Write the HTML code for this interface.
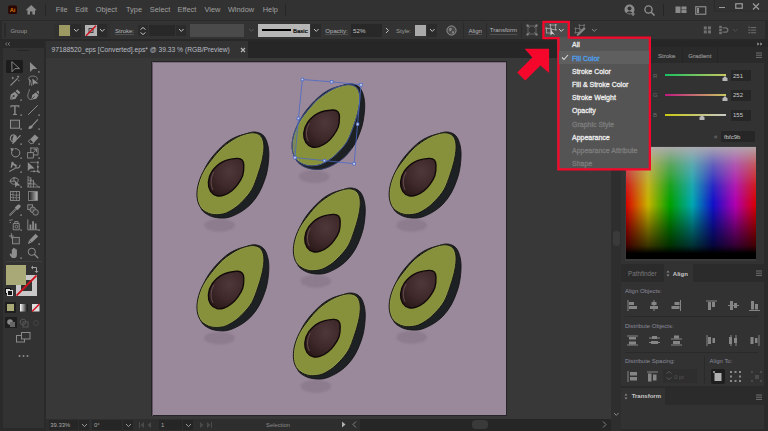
<!DOCTYPE html>
<html><head><meta charset="utf-8">
<style>
*{margin:0;padding:0;box-sizing:border-box}
html,body{width:768px;height:431px;overflow:hidden;background:#2b2b2b;font-family:"Liberation Sans",sans-serif;position:relative}
.a{position:absolute;display:block}
.t{position:absolute;white-space:nowrap;line-height:1}
</style></head><body>
<div class="a" style="left:0px;top:0px;width:768px;height:20px;background:#323232;"></div>
<div class="a" style="left:0px;top:20px;width:768px;height:1px;background:#2a2a2a;"></div>
<div class="a" style="left:0px;top:21px;width:768px;height:18px;background:#333333;"></div>
<div class="a" style="left:0px;top:39px;width:768px;height:2px;background:#282828;"></div>
<div class="a" style="left:0px;top:21px;width:2px;height:18px;background:#2a2a2a;"></div>
<div class="a" style="left:765px;top:21px;width:3px;height:18px;background:#2a2a2a;"></div>
<div class="a" style="left:0px;top:41px;width:46px;height:390px;background:#2a2a2a;"></div>
<div class="a" style="left:3px;top:41px;width:41px;height:387px;background:#323232;"></div>
<div class="a" style="left:3px;top:41px;width:41px;height:7px;background:#282828;"></div>
<div class="a" style="left:46px;top:41px;width:565px;height:17px;background:#262626;"></div>
<div class="a" style="left:46px;top:41px;width:202px;height:17px;background:#333333;"></div>
<div class="a" style="left:46px;top:58px;width:565px;height:361px;background:#383838;"></div>
<div class="a" style="left:46px;top:419px;width:565px;height:12px;background:#2e2e2e;"></div>
<div class="a" style="left:611px;top:41px;width:10px;height:390px;background:#2e2e2e;"></div>
<div class="a" style="left:621px;top:41px;width:147px;height:390px;background:#2a2a2a;"></div>
<div class="a" style="left:621px;top:63px;width:143px;height:201px;background:#323232;"></div>
<div class="a" style="left:621px;top:41px;width:147px;height:6px;background:#262626;"></div>
<div class="a" style="left:621px;top:47px;width:143px;height:16px;background:#2a2a2a;"></div>
<div class="a" style="left:621px;top:264px;width:143px;height:18px;background:#2b2b2b;"></div>
<div class="a" style="left:621px;top:282px;width:143px;height:104px;background:#323232;"></div>
<div class="a" style="left:621px;top:388px;width:143px;height:17px;background:#2b2b2b;"></div>
<div class="a" style="left:621px;top:405px;width:143px;height:24px;background:#323232;"></div>
<svg class="a" style="left:8px;top:5px;" width="10" height="10" viewBox="0 0 10 10"><rect x="0.2" y="0.4" width="8.8" height="8.6" rx="1.5" fill="#2a0600"/><text x="4.6" y="7" font-family="Liberation Sans" font-weight="bold" font-size="5.6" fill="#d87a00" text-anchor="middle">Ai</text></svg>
<svg class="a" style="left:25px;top:4px;" width="12" height="11" viewBox="0 0 12 11"><path d="M6.2 0.9 L0.6 6.3 H2.5 V10.5 H5 V7.5 H7.4 V10.5 H10 V6.3 H11.8 Z" fill="#8a8a8a"/></svg>
<div class="a" style="left:45px;top:4px;width:1px;height:12px;background:#262626;"></div>
<div class="t" style="left:55.7px;top:6.04px;font-size:7.4px;color:#a0a0a0;">File</div>
<div class="t" style="left:75.2px;top:6.04px;font-size:7.4px;color:#a0a0a0;">Edit</div>
<div class="t" style="left:95.7px;top:6.04px;font-size:7.4px;color:#a0a0a0;">Object</div>
<div class="t" style="left:126px;top:6.04px;font-size:7.4px;color:#a0a0a0;">Type</div>
<div class="t" style="left:149.8px;top:6.04px;font-size:7.4px;color:#a0a0a0;">Select</div>
<div class="t" style="left:177.5px;top:6.04px;font-size:7.4px;color:#a0a0a0;">Effect</div>
<div class="t" style="left:204.5px;top:6.04px;font-size:7.4px;color:#a0a0a0;">View</div>
<div class="t" style="left:227.9px;top:6.04px;font-size:7.4px;color:#a0a0a0;">Window</div>
<div class="t" style="left:262.7px;top:6.04px;font-size:7.4px;color:#a0a0a0;">Help</div>
<div class="a" style="left:285px;top:4px;width:1px;height:12px;background:#262626;"></div>
<svg class="a" style="left:624px;top:4px;" width="13" height="12" viewBox="0 0 13 12"><circle cx="5.5" cy="5.5" r="5" fill="#8a8a8a"/><circle cx="5.5" cy="4.5" r="2" fill="#323232"/><path d="M2 9.5 Q5.5 5 9 9.5" fill="#323232"/><path d="M9 8 V12 M7 10 H11" stroke="#8a8a8a" stroke-width="1.2"/></svg>
<svg class="a" style="left:644px;top:5px;" width="12" height="11" viewBox="0 0 12 11"><circle cx="4.5" cy="4.5" r="3.6" fill="none" stroke="#8e8e8e" stroke-width="1.4"/><path d="M7.2 7.2 L10.5 10.5" stroke="#8e8e8e" stroke-width="1.6"/></svg>
<div class="a" style="left:663px;top:4px;width:1px;height:12px;background:#262626;"></div>
<svg class="a" style="left:675px;top:6px;" width="12" height="8" viewBox="0 0 12 8"><rect x="0.5" y="0.5" width="5" height="6.5" fill="#8a8a8a"/><rect x="6.5" y="0.5" width="5" height="3" fill="#8a8a8a"/><rect x="6.5" y="4" width="5" height="3" fill="#8a8a8a"/></svg>
<svg class="a" style="left:695px;top:6px;" width="12" height="9" viewBox="0 0 12 9"><rect x="0.75" y="0.75" width="10" height="7.5" fill="none" stroke="#8a8a8a" stroke-width="1.2"/><rect x="2" y="2" width="2" height="5" fill="#8a8a8a"/></svg>
<svg class="a" style="left:714px;top:-1px;" width="55" height="13" viewBox="0 0 55 13"><rect x="0.5" y="0.5" width="60" height="11.5" fill="none" stroke="#2a2a2a" stroke-width="1"/></svg>
<div class="a" style="left:719px;top:7px;width:6px;height:1px;background:#9a9a9a;"></div>
<svg class="a" style="left:735px;top:3px;" width="8" height="6" viewBox="0 0 8 6"><rect x="0.75" y="0.75" width="6.5" height="4.5" fill="none" stroke="#9a9a9a" stroke-width="1.2"/></svg>
<svg class="a" style="left:752px;top:3px;" width="8" height="7" viewBox="0 0 8 7"><path d="M1 0.5 L7 6.5 M7 0.5 L1 6.5" stroke="#9a9a9a" stroke-width="1.2"/></svg>
<div class="a" style="left:4px;top:23px;width:2px;height:15px;background:#2a2a2a;"></div>
<div class="t" style="left:10.4px;top:27.92px;font-size:6.0px;color:#9a9a9a;">Group</div>
<div class="a" style="left:54px;top:23px;width:56px;height:15px;background:#303030;"></div>
<div class="a" style="left:59px;top:25px;width:11px;height:11px;background:#9c9a62;"></div>
<div class="a" style="left:71px;top:24px;width:10px;height:13px;background:#2a2a2a;"></div>
<svg class="a" style="left:72.7px;top:28.3px;" width="6.6" height="4.4" viewBox="0 0 6.6 4.4"><polyline points="1,1 3.3,3.4 5.6,1" fill="none" stroke="#c0c0c0" stroke-width="1"/></svg>
<svg class="a" style="left:85px;top:24.5px;" width="12" height="11.5" viewBox="0 0 12 11.5"><rect width="12" height="11.5" fill="#b4b4b4"/><rect x="4" y="3.5" width="4" height="4" fill="none" stroke="#444" stroke-width="1"/><path d="M1 10.8 L11 0.8" stroke="#d0101c" stroke-width="1.5"/></svg>
<div class="a" style="left:98px;top:24px;width:9px;height:13px;background:#2a2a2a;"></div>
<svg class="a" style="left:99.2px;top:28.3px;" width="6.6" height="4.4" viewBox="0 0 6.6 4.4"><polyline points="1,1 3.3,3.4 5.6,1" fill="none" stroke="#c0c0c0" stroke-width="1"/></svg>
<div class="t" style="left:115px;top:27.52px;font-size:6.0px;color:#b4b6ba;border-bottom:1px solid #505050;line-height:1.15">Stroke:</div>
<div class="a" style="left:138px;top:24.5px;width:10px;height:11.5px;background:#2b2b2b;"></div>
<svg class="a" style="left:139px;top:25.5px;" width="8" height="10" viewBox="0 0 8 10"><polyline points="1.5,3.5 4,1.5 6.5,3.5" fill="none" stroke="#bbb" stroke-width="1"/><polyline points="1.5,6.5 4,8.5 6.5,6.5" fill="none" stroke="#bbb" stroke-width="1"/></svg>
<div class="a" style="left:149px;top:24.5px;width:26px;height:11.5px;background:#282828;"></div>
<div class="a" style="left:176px;top:24.5px;width:10px;height:11.5px;background:#2b2b2b;"></div>
<svg class="a" style="left:177.7px;top:28.3px;" width="6.6" height="4.4" viewBox="0 0 6.6 4.4"><polyline points="1,1 3.3,3.4 5.6,1" fill="none" stroke="#c0c0c0" stroke-width="1"/></svg>
<div class="a" style="left:190px;top:24px;width:54px;height:13px;background:#4a4a4a;"></div>
<svg class="a" style="left:248.2px;top:28.3px;" width="6.6" height="4.4" viewBox="0 0 6.6 4.4"><polyline points="1,1 3.3,3.4 5.6,1" fill="none" stroke="#555" stroke-width="1"/></svg>
<div class="a" style="left:258px;top:24px;width:52px;height:13px;background:#b6b6b6;"></div>
<div class="a" style="left:262px;top:29px;width:29px;height:2px;background:#000;"></div>
<div class="t" style="left:293px;top:27.92px;font-size:6.0px;color:#000;-webkit-text-stroke:0.2px #000">Basic</div>
<div class="a" style="left:311px;top:24px;width:10px;height:13px;background:#2b2b2b;"></div>
<svg class="a" style="left:312.7px;top:28.3px;" width="6.6" height="4.4" viewBox="0 0 6.6 4.4"><polyline points="1,1 3.3,3.4 5.6,1" fill="none" stroke="#c0c0c0" stroke-width="1"/></svg>
<div class="t" style="left:325.3px;top:27.44px;font-size:6.1px;color:#b4b6ba;border-bottom:1px solid #505050;line-height:1.15">Opacity:</div>
<div class="a" style="left:351px;top:24px;width:31px;height:13px;background:#282828;"></div>
<div class="t" style="left:353px;top:27.85px;font-size:6.2px;color:#c4c4c4;">52%</div>
<svg class="a" style="left:385px;top:27px;" width="5" height="7" viewBox="0 0 5 7"><polyline points="1,1 3.5,3.5 1,6" fill="none" stroke="#c0c0c0" stroke-width="1"/></svg>
<div class="t" style="left:396px;top:28.02px;font-size:6.0px;color:#9a9a9a;">Style:</div>
<div class="a" style="left:415px;top:24.5px;width:11px;height:11.5px;background:#aaaaaa;"></div>
<div class="a" style="left:427px;top:24px;width:10px;height:13px;background:#2b2b2b;"></div>
<svg class="a" style="left:428.7px;top:28.3px;" width="6.6" height="4.4" viewBox="0 0 6.6 4.4"><polyline points="1,1 3.3,3.4 5.6,1" fill="none" stroke="#c0c0c0" stroke-width="1"/></svg>
<svg class="a" style="left:446px;top:24.5px;" width="11" height="11" viewBox="0 0 11 11"><circle cx="5.5" cy="5.5" r="4.6" fill="#4a4a4a" stroke="#9a9a9a" stroke-width="0.9"/><path d="M3 3.5 Q5 2.5 6 4 Q5 6 3.5 6.5 Z M6.5 6 Q8.5 6 8 8 Q6.5 9 6 8 Z" fill="#8a8a8a"/></svg>
<div class="a" style="left:463px;top:23px;width:1px;height:15px;background:#2a2a2a;"></div>
<div class="t" style="left:468.4px;top:27.44px;font-size:6.1px;color:#b4b6ba;border-bottom:1px solid #505050;line-height:1.15">Align</div>
<div class="a" style="left:486px;top:23px;width:1px;height:15px;background:#2a2a2a;"></div>
<div class="t" style="left:489.7px;top:27.48px;font-size:6.05px;color:#b4b6ba;border-bottom:1px solid #505050;line-height:1.15">Transform</div>
<div class="a" style="left:521px;top:23px;width:1px;height:15px;background:#2a2a2a;"></div>
<svg class="a" style="left:526px;top:24px;" width="12" height="12" viewBox="0 0 12 12"><g stroke="#7a7a7a" stroke-width="0.7" fill="none"><rect x="2" y="2" width="8" height="8"/><path d="M2 2 L4 4 M10 2 L8 4 M2 10 L4 8 M10 10 L8 8"/></g><g fill="#8a8a8a"><rect x="0.5" y="0.5" width="2" height="2"/><rect x="9.5" y="0.5" width="2" height="2"/><rect x="0.5" y="9.5" width="2" height="2"/><rect x="9.5" y="9.5" width="2" height="2"/></g></svg>
<div class="a" style="left:543px;top:21px;width:27px;height:18px;background:#4c4c4c;"></div>
<svg class="a" style="left:545px;top:24px;" width="14" height="12" viewBox="0 0 14 12"><g fill="none" stroke="#a8a8a8" stroke-width="0.8"><rect x="1.5" y="4.5" width="5" height="4.5"/><rect x="5.5" y="1" width="5" height="4.5"/></g><g fill="#a8a8a8"><rect x="0.5" y="3.5" width="1.6" height="1.6"/><rect x="4.5" y="0" width="1.6" height="1.6"/><rect x="10" y="0" width="1.6" height="1.6"/><rect x="10" y="5" width="1.6" height="1.6"/></g><path d="M5.5 5.5 L5.5 11.5 L7.2 9.8 L10 11 Z" fill="#d0d0d0"/></svg>
<svg class="a" style="left:557.7px;top:28.3px;" width="6.6" height="4.4" viewBox="0 0 6.6 4.4"><polyline points="1,1 3.3,3.4 5.6,1" fill="none" stroke="#d0d0d0" stroke-width="1"/></svg>
<svg class="a" style="left:574px;top:24px;" width="14" height="12" viewBox="0 0 14 12"><g fill="none" stroke="#747474" stroke-width="0.8"><rect x="1.5" y="4.5" width="4.5" height="4"/><rect x="5.5" y="1.3" width="4.5" height="4"/></g><g fill="#747474"><rect x="0.6" y="3.6" width="1.5" height="1.5"/><rect x="0.6" y="8" width="1.5" height="1.5"/><rect x="4.6" y="0.4" width="1.5" height="1.5"/><rect x="9.5" y="0.4" width="1.5" height="1.5"/></g><path d="M3.8 10.8 L10.2 4.6" stroke="#858585" stroke-width="2.2" stroke-linecap="round"/></svg>
<svg class="a" style="left:590.7px;top:28.3px;" width="6.6" height="4.4" viewBox="0 0 6.6 4.4"><polyline points="1,1 3.3,3.4 5.6,1" fill="none" stroke="#8a8a8a" stroke-width="1"/></svg>
<svg class="a" style="left:703px;top:26px;" width="9" height="8" viewBox="0 0 9 8"><g fill="#707070"><rect x="0.8" y="0.4" width="3" height="3"/><rect x="5" y="0.4" width="3" height="3"/><rect x="0.8" y="4.4" width="3" height="3"/><rect x="5" y="4.4" width="3" height="3"/></g></svg>
<svg class="a" style="left:718px;top:25px;" width="12" height="10" viewBox="0 0 12 10"><g fill="#707070"><rect x="1.2" y="0.8" width="2.6" height="2.4"/><rect x="1.2" y="3.8" width="2.6" height="2.4"/><rect x="1.2" y="6.8" width="2.6" height="2.4"/></g><path d="M4.5 2.8 H7.5 Q9.8 2.8 9.8 5 Q9.8 7.2 7.5 7.2 H4.5" fill="none" stroke="#707070" stroke-width="1.3"/></svg>
<svg class="a" style="left:731.7px;top:28.3px;" width="6.6" height="4.4" viewBox="0 0 6.6 4.4"><polyline points="1,1 3.3,3.4 5.6,1" fill="none" stroke="#4e4e4e" stroke-width="1"/></svg>
<svg class="a" style="left:748px;top:26px;" width="9" height="8" viewBox="0 0 9 8"><g fill="#6a6a6a"><rect x="0.5" y="0.6" width="1.3" height="1.5"/><rect x="0.5" y="3.3" width="1.3" height="1.5"/><rect x="0.5" y="6" width="1.3" height="1.5"/><rect x="2.6" y="1" width="5.5" height="1.1"/><rect x="2.6" y="3.6" width="5.5" height="1.1"/><rect x="2.6" y="6.2" width="5.5" height="1.1"/></g></svg>
<div class="a" style="left:151px;top:61px;width:356px;height:355px;background:#262426;"></div>
<div class="a" style="left:152px;top:62px;width:354px;height:353px;background:#9a899b;"></div>
<div class="a" style="left:151.5px;top:61.5px;width:1.5px;height:354px;background:#665868;"></div>
<div class="a" style="left:151.5px;top:61.5px;width:354px;height:1px;background:#7a6c7c;"></div>
<div class="t" style="left:51.5px;top:46.70px;font-size:6.73px;color:#b8bcc4;">97188520_eps [Converted].eps* @ 39.33 % (RGB/Preview)</div>
<svg class="a" style="left:239.5px;top:46.5px;" width="6" height="6" viewBox="0 0 6 6"><path d="M1 1 L5 5 M5 1 L1 5" stroke="#b8b8b8" stroke-width="1.1"/></svg>
<svg class="a" style="left:5px;top:42px;" width="6" height="4" viewBox="0 0 6 4"><path d="M2 0.3 L0.6 2 L2 3.7 M4.6 0.3 L3.2 2 L4.6 3.7" fill="none" stroke="#8a8a8a" stroke-width="0.8"/></svg>
<div class="a" style="left:17px;top:50px;width:12px;height:1.2px;background:#262626;"></div>
<div class="a" style="left:6px;top:60px;width:17px;height:13px;background:#1c1c1c;border-radius:1.5px"></div>
<svg class="a" style="left:8.5px;top:60.8px;" width="12" height="12" viewBox="0 0 12 12"><path d="M2.8 1 L3 10.8 L5.9 7.6 L10.1 7.6 Z" fill="none" stroke="#8e8e8e" stroke-width="0.9" stroke-linejoin="round" stroke-linecap="round"/></svg>
<svg class="a" style="left:26.5px;top:60.8px;" width="12" height="12" viewBox="0 0 12 12"><path d="M2.9 1 L3.1 11.1 L6 8 L10.2 8 Z" fill="#8e8e8e"/></svg>
<svg class="a" style="left:38.3px;top:71.2px;" width="1.8" height="1.8" viewBox="0 0 1.8 1.8"><circle cx="0.9" cy="0.9" r="0.85" fill="#8a8a8a"/></svg>
<svg class="a" style="left:8.5px;top:75.14px;" width="12" height="12" viewBox="0 0 12 12"><path d="M1.8 10.2 L8.4 3.6" fill="none" stroke="#8e8e8e" stroke-width="1.2" stroke-linejoin="round" stroke-linecap="round"/><path d="M3.8 1.4 L4.324999999999999 2.375 L5.3 2.9 L4.324999999999999 3.425 L3.8 4.4 L3.275 3.425 L2.3 2.9 L3.275 2.375 Z" fill="#8e8e8e"/><path d="M9.1 0.30000000000000004 L9.625 1.2750000000000001 L10.6 1.8 L9.625 2.325 L9.1 3.3 L8.575 2.325 L7.6 1.8 L8.575 1.2750000000000001 Z" fill="#8e8e8e"/><path d="M9.8 4.5 L10.15 5.15 L10.8 5.5 L10.15 5.85 L9.8 6.5 L9.450000000000001 5.85 L8.8 5.5 L9.450000000000001 5.15 Z" fill="#8e8e8e"/></svg>
<svg class="a" style="left:26.5px;top:75.14px;" width="12" height="12" viewBox="0 0 12 12"><path d="M3.2 6 C0.5 4.5 1.5 1 5.5 1 C9.5 1 11.5 3 10 5.2 M2.5 4.5 C2 6.5 3 8 2.5 10 M3.5 5.5 C4 7 4 9 4.5 10.5" fill="none" stroke="#8e8e8e" stroke-width="0.8" stroke-linejoin="round" stroke-linecap="round"/><path d="M5.3 3.6 L5.8 10.5 L7.6 8.6 L11.6 8.6 Z" fill="#8e8e8e"/></svg>
<svg class="a" style="left:8.5px;top:89.47999999999999px;" width="12" height="12" viewBox="0 0 12 12"><path d="M0.8 10.8 L1.8 5.6 L5.8 2.8 L9 6 L6.3 10 Z M6.6 2.1 L8.4 0.6 L11.3 3.5 L9.8 5.3 Z" fill="#8e8e8e"/><path d="M1 10.6 L4.2 7.4" fill="none" stroke="#323232" stroke-width="0.7" stroke-linejoin="round" stroke-linecap="round"/><circle cx="4.7" cy="6.9" r="0.9" fill="#323232"/></svg>
<svg class="a" style="left:20.2px;top:99.47999999999999px;" width="2.2" height="2.2" viewBox="0 0 2.2 2.2"><circle cx="1.1" cy="1.1" r="0.85" fill="#8a8a8a"/></svg>
<svg class="a" style="left:26.5px;top:89.47999999999999px;" width="12" height="12" viewBox="0 0 12 12"><path d="M4.3 10.8 L5.2 6 L8.8 3.4 L11.6 6.3 L9.3 9.8 Z M9.4 2.9 L10.9 1.6 L13 3.8 L12 5.2 Z" fill="#8e8e8e"/><path d="M4.5 10.6 L7.3 7.6" fill="none" stroke="#323232" stroke-width="0.7" stroke-linejoin="round" stroke-linecap="round"/><path d="M1.8 -0.5 C3.8 1.5 0.5 4 0.8 7 C1 9.5 2.5 11 4.5 10.5" fill="none" stroke="#8e8e8e" stroke-width="0.8" stroke-linejoin="round" stroke-linecap="round"/></svg>
<svg class="a" style="left:8.5px;top:103.82px;" width="12" height="12" viewBox="0 0 12 12"><path d="M1.5 1.2 H10.3 V3.6 H9.4 V2.4 H6.6 V10 H7.9 V10.9 H3.9 V10 H5.2 V2.4 H2.4 V3.6 H1.5 Z" fill="#8e8e8e"/></svg>
<svg class="a" style="left:20.2px;top:113.82px;" width="2.2" height="2.2" viewBox="0 0 2.2 2.2"><circle cx="1.1" cy="1.1" r="0.85" fill="#8a8a8a"/></svg>
<svg class="a" style="left:26.5px;top:103.82px;" width="12" height="12" viewBox="0 0 12 12"><path d="M1.4 10.6 L10.4 1.6" fill="none" stroke="#8e8e8e" stroke-width="1.0" stroke-linejoin="round" stroke-linecap="round"/></svg>
<svg class="a" style="left:38.2px;top:113.82px;" width="2.2" height="2.2" viewBox="0 0 2.2 2.2"><circle cx="1.1" cy="1.1" r="0.85" fill="#8a8a8a"/></svg>
<svg class="a" style="left:8.5px;top:118.16px;" width="12" height="12" viewBox="0 0 12 12"><rect x="1.5" y="2.2" width="9" height="8" fill="#3e3e3e" stroke="#8e8e8e" stroke-width="1"/></svg>
<svg class="a" style="left:20.2px;top:128.16px;" width="2.2" height="2.2" viewBox="0 0 2.2 2.2"><circle cx="1.1" cy="1.1" r="0.85" fill="#8a8a8a"/></svg>
<svg class="a" style="left:26.5px;top:118.16px;" width="12" height="12" viewBox="0 0 12 12"><path d="M1.5 11 C1.5 8.5 2.5 7.2 4.6 7.4 L10.6 1 L11.3 1.7 L5.6 8.3 C5.8 10.3 4.2 11.2 1.5 11 Z" fill="#8e8e8e"/></svg>
<svg class="a" style="left:38.2px;top:128.16px;" width="2.2" height="2.2" viewBox="0 0 2.2 2.2"><circle cx="1.1" cy="1.1" r="0.85" fill="#8a8a8a"/></svg>
<svg class="a" style="left:8.5px;top:132.5px;" width="12" height="12" viewBox="0 0 12 12"><path d="M4.8 1.8 C1.5 1.8 0.3 5.5 2.3 7.8 C3.5 9 5.5 8.6 6.5 7.8" fill="none" stroke="#8e8e8e" stroke-width="1.1" stroke-linejoin="round" stroke-linecap="round"/><path d="M3.8 10.2 L11.2 2.6" fill="none" stroke="#8e8e8e" stroke-width="1.3" stroke-linejoin="round" stroke-linecap="round"/><path d="M4.8 1.8 C7.5 1.8 8.6 4 7.6 6.2 L5 8.6 C3.2 8 3 6 4 4.5 Z" fill="#8e8e8e"/></svg>
<svg class="a" style="left:20.2px;top:142.5px;" width="2.2" height="2.2" viewBox="0 0 2.2 2.2"><circle cx="1.1" cy="1.1" r="0.85" fill="#8a8a8a"/></svg>
<svg class="a" style="left:26.5px;top:132.5px;" width="12" height="12" viewBox="0 0 12 12"><path d="M3.2 6.3 L7.8 1.4 L11.6 4.8 L6.6 10 Z" fill="#8e8e8e"/><path d="M3.2 6.3 L1.4 8.3 L3.8 10.8 L6.6 10" fill="none" stroke="#8e8e8e" stroke-width="0.9" stroke-linejoin="round" stroke-linecap="round"/></svg>
<svg class="a" style="left:38.2px;top:142.5px;" width="2.2" height="2.2" viewBox="0 0 2.2 2.2"><circle cx="1.1" cy="1.1" r="0.85" fill="#8a8a8a"/></svg>
<svg class="a" style="left:8.5px;top:146.83999999999997px;" width="12" height="12" viewBox="0 0 12 12"><path d="M3.3 3.2 A4.2 4.2 0 1 0 6 1.6" fill="none" stroke="#8e8e8e" stroke-width="1.0" stroke-linejoin="round" stroke-linecap="round"/><path d="M1.4 0.8 L5.2 1.8 L2.6 4.6 Z" fill="#8e8e8e"/></svg>
<svg class="a" style="left:20.2px;top:156.83999999999997px;" width="2.2" height="2.2" viewBox="0 0 2.2 2.2"><circle cx="1.1" cy="1.1" r="0.85" fill="#8a8a8a"/></svg>
<svg class="a" style="left:26.5px;top:146.83999999999997px;" width="12" height="12" viewBox="0 0 12 12"><path d="M0.8 5.6 H6.4 V11 H0.8 Z M3.8 1 H11 V8 H6.4 M3.8 1 V5.6 M6.3 5.5 L9.5 2.3 M7 2.3 H9.5 V4.8" fill="none" stroke="#8e8e8e" stroke-width="0.9" stroke-linejoin="round" stroke-linecap="round"/></svg>
<svg class="a" style="left:38.2px;top:156.83999999999997px;" width="2.2" height="2.2" viewBox="0 0 2.2 2.2"><circle cx="1.1" cy="1.1" r="0.85" fill="#8a8a8a"/></svg>
<svg class="a" style="left:8.5px;top:161.18px;" width="12" height="12" viewBox="0 0 12 12"><path d="M0.8 10.4 C2.5 8.5 4 9.5 5.5 7.5 C6.5 6 8 7.5 9.5 6.8 C10.8 6.2 11 5 11 4" fill="none" stroke="#8e8e8e" stroke-width="1.1" stroke-linejoin="round" stroke-linecap="round"/><path d="M2.5 1 C4 0.3 5 1.2 4.8 2.5 C6.5 3 8 3.5 8 5.3 L6.5 6 C5.5 4.5 4.5 4 3.6 4.6 L2.6 7 L1.6 6.4 L2.2 3.6 Z" fill="#8e8e8e"/></svg>
<svg class="a" style="left:20.2px;top:171.18px;" width="2.2" height="2.2" viewBox="0 0 2.2 2.2"><circle cx="1.1" cy="1.1" r="0.85" fill="#8a8a8a"/></svg>
<svg class="a" style="left:26.5px;top:161.18px;" width="12" height="12" viewBox="0 0 12 12"><path d="M0.8 1 L0.8 10 L3.2 7.8 L7.6 7.4 Z" fill="#8e8e8e"/><path d="M3.5 1.3 H10.8 V10.3 H3.5" fill="none" stroke="#8e8e8e" stroke-width="0.7" stroke-linejoin="round" stroke-linecap="round"/><g fill="#8e8e8e"><rect x="10" y="0.5" width="1.7" height="1.7"/><rect x="10" y="9.5" width="1.7" height="1.7"/><rect x="6.3" y="9.5" width="1.7" height="1.7"/><rect x="10" y="5" width="1.7" height="1.7"/></g></svg>
<svg class="a" style="left:38.2px;top:171.18px;" width="2.2" height="2.2" viewBox="0 0 2.2 2.2"><circle cx="1.1" cy="1.1" r="0.85" fill="#8a8a8a"/></svg>
<svg class="a" style="left:8.5px;top:175.51999999999998px;" width="12" height="12" viewBox="0 0 12 12"><path d="M5.2 1.8 C0.5 1.8 0 7.5 4.5 8.2 C8 8.5 10.5 4 8.5 2.6 C7.6 2 6.5 1.8 5.2 1.8 Z M0.8 5.2 H5.5 M5 2 V5" fill="none" stroke="#8e8e8e" stroke-width="0.9" stroke-linejoin="round" stroke-linecap="round"/><path d="M5.8 4.6 L6.2 11.4 L8 9.6 L11.6 9.8 Z" fill="#8e8e8e"/></svg>
<svg class="a" style="left:20.2px;top:185.51999999999998px;" width="2.2" height="2.2" viewBox="0 0 2.2 2.2"><circle cx="1.1" cy="1.1" r="0.85" fill="#8a8a8a"/></svg>
<svg class="a" style="left:26.5px;top:175.51999999999998px;" width="12" height="12" viewBox="0 0 12 12"><path d="M1 0.8 V11 H11 Z M1 4 L4.5 4.8 M1 7.5 L8 8.2 M3.8 1.6 V11 M6.5 4.2 V11 M1 11 L3.8 4.3" fill="none" stroke="#8e8e8e" stroke-width="0.8" stroke-linejoin="round" stroke-linecap="round"/></svg>
<svg class="a" style="left:38.2px;top:185.51999999999998px;" width="2.2" height="2.2" viewBox="0 0 2.2 2.2"><circle cx="1.1" cy="1.1" r="0.85" fill="#8a8a8a"/></svg>
<svg class="a" style="left:8.5px;top:189.86px;" width="12" height="12" viewBox="0 0 12 12"><rect x="1.5" y="1.6" width="9" height="8.8" fill="none" stroke="#8e8e8e" stroke-width="0.9"/><path d="M1.5 4.5 C4 3.5 6 6.5 10.5 5 M1.5 7.5 C4 6.5 6 8.8 10.5 7.5 M4.2 1.6 C3 4.5 5.2 7.5 4 10.4 M7.4 1.6 C8.5 4.5 6.2 7.5 7.6 10.4" fill="none" stroke="#8e8e8e" stroke-width="0.7" stroke-linejoin="round" stroke-linecap="round"/></svg>
<svg class="a" style="left:26.5px;top:189.86px;" width="12" height="12" viewBox="0 0 12 12"><defs><linearGradient id="gr"><stop offset="0" stop-color="#1a1a1a"/><stop offset="1" stop-color="#b8b8b8"/></linearGradient></defs><rect x="1.5" y="1.6" width="9" height="8.8" fill="url(#gr)" stroke="#8e8e8e" stroke-width="0.8"/></svg>
<svg class="a" style="left:8.5px;top:204.2px;" width="12" height="12" viewBox="0 0 12 12"><path d="M1.2 10.8 L6.8 5.2" fill="none" stroke="#8e8e8e" stroke-width="1.8" stroke-linejoin="round" stroke-linecap="round"/><path d="M1.2 10.8 L6.8 5.2" fill="none" stroke="#323232" stroke-width="0.6" stroke-linejoin="round" stroke-linecap="round"/><path d="M5.8 3.6 L8.5 0.9 C9.3 0.2 10.6 0.4 11.2 1 C11.8 1.6 11.8 2.8 11.1 3.6 L8.4 6.2 Z" fill="#8e8e8e"/></svg>
<svg class="a" style="left:20.2px;top:214.2px;" width="2.2" height="2.2" viewBox="0 0 2.2 2.2"><circle cx="1.1" cy="1.1" r="0.85" fill="#8a8a8a"/></svg>
<svg class="a" style="left:26.5px;top:204.2px;" width="12" height="12" viewBox="0 0 12 12"><rect x="0.8" y="0.8" width="4.8" height="4.8" fill="#3a3a3a" stroke="#8e8e8e" stroke-width="0.9"/><circle cx="5.8" cy="5.8" r="2.8" fill="#4a4a4a" stroke="#8e8e8e" stroke-width="0.9"/><circle cx="8.6" cy="8.4" r="2.8" fill="#3a3a3a" stroke="#8e8e8e" stroke-width="0.9"/></svg>
<svg class="a" style="left:8.5px;top:218.54000000000002px;" width="12" height="12" viewBox="0 0 12 12"><path d="M4.6 4.6 H10.2 V10.8 H4.6 Z M5.8 4.6 V2.6 H9 V4.6" fill="none" stroke="#8e8e8e" stroke-width="0.9" stroke-linejoin="round" stroke-linecap="round"/><path d="M0.5 0.8 H1.6 V1.9 H0.5 Z M2.3 0.3 H3.4 V1.4 H2.3 Z M0.7 3 H1.8 V4.1 H0.7 Z" fill="#8e8e8e"/><circle cx="7.4" cy="7.7" r="1.4" fill="none" stroke="#8e8e8e" stroke-width="0.8"/></svg>
<svg class="a" style="left:20.2px;top:228.54000000000002px;" width="2.2" height="2.2" viewBox="0 0 2.2 2.2"><circle cx="1.1" cy="1.1" r="0.85" fill="#8a8a8a"/></svg>
<svg class="a" style="left:26.5px;top:218.54000000000002px;" width="12" height="12" viewBox="0 0 12 12"><path d="M0.8 0.8 V10.8 H11" fill="none" stroke="#8e8e8e" stroke-width="0.9" stroke-linejoin="round" stroke-linecap="round"/><path d="M2.6 5.6 H4.3 V10.4 H2.6 Z M5.2 2.2 H6.9 V10.4 H5.2 Z M7.8 4.4 H9.5 V10.4 H7.8 Z" fill="#8e8e8e"/></svg>
<svg class="a" style="left:38.2px;top:228.54000000000002px;" width="2.2" height="2.2" viewBox="0 0 2.2 2.2"><circle cx="1.1" cy="1.1" r="0.85" fill="#8a8a8a"/></svg>
<svg class="a" style="left:8.5px;top:232.88px;" width="12" height="12" viewBox="0 0 12 12"><path d="M0.3 3 H4.5 M2.4 0.6 V5" fill="none" stroke="#8e8e8e" stroke-width="0.9" stroke-linejoin="round" stroke-linecap="round"/><rect x="3.5" y="4.4" width="6.8" height="6.4" fill="#3e3e3e" stroke="#8e8e8e" stroke-width="0.9"/></svg>
<svg class="a" style="left:26.5px;top:232.88px;" width="12" height="12" viewBox="0 0 12 12"><path d="M0.8 11 L2.2 7.2 L8.6 0.8 L11.2 3.4 L4.8 9.6 Z" fill="#8e8e8e"/><path d="M2.6 7.6 L4.4 9.4" fill="none" stroke="#323232" stroke-width="0.6" stroke-linejoin="round" stroke-linecap="round"/></svg>
<svg class="a" style="left:38.2px;top:242.88px;" width="2.2" height="2.2" viewBox="0 0 2.2 2.2"><circle cx="1.1" cy="1.1" r="0.85" fill="#8a8a8a"/></svg>
<svg class="a" style="left:8.5px;top:247.21999999999997px;" width="12" height="12" viewBox="0 0 12 12"><path d="M3.2 11 C1.8 9.5 0.4 7.6 0.8 6.8 C1.2 6.2 2.2 6.8 2.8 7.6 V2.6 C2.8 1.8 4 1.8 4 2.6 V5.8 V1.4 C4 0.6 5.3 0.6 5.3 1.4 V5.8 V1.8 C5.3 1 6.6 1 6.6 1.8 V5.8 V2.8 C6.6 2 7.9 2 7.9 2.8 V7.8 C7.9 10 6.8 11 5.8 11 Z" fill="#8e8e8e"/></svg>
<svg class="a" style="left:20.2px;top:257.21999999999997px;" width="2.2" height="2.2" viewBox="0 0 2.2 2.2"><circle cx="1.1" cy="1.1" r="0.85" fill="#8a8a8a"/></svg>
<svg class="a" style="left:26.5px;top:247.21999999999997px;" width="12" height="12" viewBox="0 0 12 12"><circle cx="4.8" cy="4.8" r="3.6" fill="none" stroke="#8e8e8e" stroke-width="1.0"/><path d="M7.4 7.4 L10.8 10.8" fill="none" stroke="#8e8e8e" stroke-width="1.3" stroke-linejoin="round" stroke-linecap="round"/></svg>
<div class="a" style="left:6px;top:261px;width:36px;height:1px;background:#3e3e3e;"></div>
<svg class="a" style="left:16px;top:275px;" width="22" height="22" viewBox="0 0 22 22"><rect x="0" y="0" width="21" height="21" fill="#c8c8c8"/><rect x="5" y="5" width="11" height="11" fill="#323232"/><path d="M0.5 20.5 L20.5 0.5" stroke="#d0101c" stroke-width="1.8"/></svg>
<div class="a" style="left:6px;top:265px;width:20px;height:20px;background:#a9a877;"></div>
<svg class="a" style="left:31px;top:265px;" width="8" height="8" viewBox="0 0 8 8"><path d="M1.5 2.5 H5.5 V6.5" fill="none" stroke="#a0a0a0" stroke-width="1"/><path d="M0 2.5 L2 0.5 V4.5 Z M5.5 8 L3.5 6 H7.5 Z" fill="#a0a0a0"/></svg>
<svg class="a" style="left:5px;top:288px;" width="8" height="8" viewBox="0 0 8 8"><rect x="0.5" y="0.5" width="5" height="5" fill="#ddd" stroke="#111" stroke-width="1"/><rect x="2.5" y="2.5" width="5" height="5" fill="#111" stroke="#ddd" stroke-width="1"/></svg>
<div class="a" style="left:5px;top:302px;width:11px;height:11px;background:#1e1e1e;"></div>
<div class="a" style="left:7px;top:304px;width:7px;height:7px;background:#a9a877;"></div>
<svg class="a" style="left:19px;top:303px;" width="10" height="10" viewBox="0 0 10 10"><defs><linearGradient id="gr2"><stop offset="0" stop-color="#fff"/><stop offset="1" stop-color="#111"/></linearGradient></defs><rect x="1" y="1" width="7.5" height="7.5" fill="url(#gr2)"/></svg>
<svg class="a" style="left:31px;top:303px;" width="10" height="10" viewBox="0 0 10 10"><rect x="1" y="1" width="7.5" height="7.5" fill="#ddd"/><path d="M1 8.5 L8.5 1" stroke="#d0101c" stroke-width="1.4"/></svg>
<div class="a" style="left:5px;top:317px;width:12px;height:11px;background:#1e1e1e;"></div>
<svg class="a" style="left:6px;top:318px;" width="10" height="10" viewBox="0 0 10 10"><circle cx="4" cy="4" r="2.8" fill="#888"/><rect x="4" y="4" width="5" height="5" fill="#666"/></svg>
<svg class="a" style="left:19px;top:318px;" width="10" height="10" viewBox="0 0 10 10"><circle cx="4" cy="4" r="2.8" fill="none" stroke="#555"/><rect x="4" y="4" width="5" height="5" fill="none" stroke="#555"/></svg>
<svg class="a" style="left:31px;top:318px;" width="10" height="10" viewBox="0 0 10 10"><circle cx="5" cy="5" r="2.5" fill="none" stroke="#444"/></svg>
<svg class="a" style="left:16px;top:332px;" width="15" height="11" viewBox="0 0 15 11"><rect x="0.5" y="3.5" width="8" height="6.5" fill="none" stroke="#8a8a8a"/><rect x="5.5" y="0.5" width="8.5" height="6.5" fill="#323232" stroke="#8a8a8a"/></svg>
<svg class="a" style="left:18px;top:354px;" width="11" height="4" viewBox="0 0 11 4"><circle cx="1.5" cy="2" r="1" fill="#8a8a8a"/><circle cx="5.5" cy="2" r="1" fill="#8a8a8a"/><circle cx="9.5" cy="2" r="1" fill="#8a8a8a"/></svg>
<svg class="a" style="left:152px;top:62px;" width="354" height="353" viewBox="0 0 354 353"><defs><radialGradient id="pitg" cx="0.6" cy="0.35" r="0.7"><stop offset="0" stop-color="#4f383a"/><stop offset="0.6" stop-color="#3e2829"/><stop offset="1" stop-color="#2c1a1b"/></radialGradient><filter id="shblur" x="-50%" y="-50%" width="200%" height="200%"><feGaussianBlur stdDeviation="3"/></filter><clipPath id="fclip"><path d="M245.0 28.0 C253.8 28.5 262.2 31.5 268.0 36.0 C273.8 40.5 277.5 46.8 280.0 55.0 C282.5 63.2 283.7 72.5 283.0 85.0 C282.3 97.5 279.7 114.2 276.0 130.0 C272.3 145.8 267.0 163.0 261.0 180.0 C255.0 197.0 248.8 216.7 240.0 232.0 C231.2 247.3 218.7 260.7 208.0 272.0 C197.3 283.3 187.7 292.2 176.0 300.0 C164.3 307.8 151.7 315.7 138.0 319.0 C124.3 322.3 107.2 323.2 94.0 320.0 C80.8 316.8 67.3 309.2 59.0 300.0 C50.7 290.8 46.2 278.3 44.0 265.0 C41.8 251.7 42.7 235.8 46.0 220.0 C49.3 204.2 55.8 185.8 64.0 170.0 C72.2 154.2 83.2 140.0 95.0 125.0 C106.8 110.0 120.8 92.8 135.0 80.0 C149.2 67.2 166.7 55.8 180.0 48.0 C193.3 40.2 204.2 36.3 215.0 33.0 C225.8 29.7 236.2 27.5 245.0 28.0Z"/></clipPath><g id="av"><ellipse cx="124" cy="360" rx="55" ry="23" fill="#8c7c8e" filter="url(#shblur)"/><path d="M215.0 33.0 C225.0 30.2 235.8 25.5 245.0 25.0 C254.2 24.5 263.0 26.7 270.0 30.0 C277.0 33.3 282.3 37.5 287.0 45.0 C291.7 52.5 295.7 64.2 298.0 75.0 C300.3 85.8 301.3 95.8 301.0 110.0 C300.7 124.2 298.7 145.0 296.0 160.0 C293.3 175.0 290.2 185.8 285.0 200.0 C279.8 214.2 273.3 230.8 265.0 245.0 C256.7 259.2 246.7 273.3 235.0 285.0 C223.3 296.7 209.2 307.0 195.0 315.0 C180.8 323.0 165.0 330.3 150.0 333.0 C135.0 335.7 117.5 333.5 105.0 331.0 C92.5 328.5 82.8 323.2 75.0 318.0 C67.2 312.8 61.8 308.0 58.0 300.0 C54.2 292.0 53.3 281.7 52.0 270.0 C50.7 258.3 48.7 244.2 50.0 230.0 C51.3 215.8 55.0 200.0 60.0 185.0 C65.0 170.0 71.3 154.5 80.0 140.0 C88.7 125.5 100.3 111.0 112.0 98.0 C123.7 85.0 137.8 71.3 150.0 62.0 C162.2 52.7 174.2 46.8 185.0 42.0 C195.8 37.2 205.0 35.8 215.0 33.0Z" fill="#1d2123" stroke="#121212" stroke-width="3"/><path d="M245.0 28.0 C253.8 28.5 262.2 31.5 268.0 36.0 C273.8 40.5 277.5 46.8 280.0 55.0 C282.5 63.2 283.7 72.5 283.0 85.0 C282.3 97.5 279.7 114.2 276.0 130.0 C272.3 145.8 267.0 163.0 261.0 180.0 C255.0 197.0 248.8 216.7 240.0 232.0 C231.2 247.3 218.7 260.7 208.0 272.0 C197.3 283.3 187.7 292.2 176.0 300.0 C164.3 307.8 151.7 315.7 138.0 319.0 C124.3 322.3 107.2 323.2 94.0 320.0 C80.8 316.8 67.3 309.2 59.0 300.0 C50.7 290.8 46.2 278.3 44.0 265.0 C41.8 251.7 42.7 235.8 46.0 220.0 C49.3 204.2 55.8 185.8 64.0 170.0 C72.2 154.2 83.2 140.0 95.0 125.0 C106.8 110.0 120.8 92.8 135.0 80.0 C149.2 67.2 166.7 55.8 180.0 48.0 C193.3 40.2 204.2 36.3 215.0 33.0 C225.8 29.7 236.2 27.5 245.0 28.0Z" fill="#87903b"/><path d="M245.0 28.0 C253.8 28.5 262.2 31.5 268.0 36.0 C273.8 40.5 277.5 46.8 280.0 55.0 C282.5 63.2 283.7 72.5 283.0 85.0 C282.3 97.5 279.7 114.2 276.0 130.0 C272.3 145.8 267.0 163.0 261.0 180.0 C255.0 197.0 248.8 216.7 240.0 232.0 C231.2 247.3 218.7 260.7 208.0 272.0 C197.3 283.3 187.7 292.2 176.0 300.0 C164.3 307.8 151.7 315.7 138.0 319.0 C124.3 322.3 107.2 323.2 94.0 320.0 C80.8 316.8 67.3 309.2 59.0 300.0 C50.7 290.8 46.2 278.3 44.0 265.0 C41.8 251.7 42.7 235.8 46.0 220.0 C49.3 204.2 55.8 185.8 64.0 170.0 C72.2 154.2 83.2 140.0 95.0 125.0 C106.8 110.0 120.8 92.8 135.0 80.0 C149.2 67.2 166.7 55.8 180.0 48.0 C193.3 40.2 204.2 36.3 215.0 33.0 C225.8 29.7 236.2 27.5 245.0 28.0Z" fill="none" stroke="#939b50" stroke-width="8" clip-path="url(#fclip)"/><path d="M245.0 28.0 C253.8 28.5 262.2 31.5 268.0 36.0 C273.8 40.5 277.5 46.8 280.0 55.0 C282.5 63.2 283.7 72.5 283.0 85.0 C282.3 97.5 279.7 114.2 276.0 130.0 C272.3 145.8 267.0 163.0 261.0 180.0 C255.0 197.0 248.8 216.7 240.0 232.0 C231.2 247.3 218.7 260.7 208.0 272.0 C197.3 283.3 187.7 292.2 176.0 300.0 C164.3 307.8 151.7 315.7 138.0 319.0 C124.3 322.3 107.2 323.2 94.0 320.0 C80.8 316.8 67.3 309.2 59.0 300.0 C50.7 290.8 46.2 278.3 44.0 265.0 C41.8 251.7 42.7 235.8 46.0 220.0 C49.3 204.2 55.8 185.8 64.0 170.0 C72.2 154.2 83.2 140.0 95.0 125.0 C106.8 110.0 120.8 92.8 135.0 80.0 C149.2 67.2 166.7 55.8 180.0 48.0 C193.3 40.2 204.2 36.3 215.0 33.0 C225.8 29.7 236.2 27.5 245.0 28.0Z" fill="none" stroke="#161610" stroke-width="3.5"/><path d="M186.0 120.0 C197.7 119.0 200.8 121.8 205.0 126.0 C209.2 130.2 210.7 135.8 211.0 145.0 C211.3 154.2 210.5 169.8 207.0 181.0 C203.5 192.2 196.5 202.8 190.0 212.0 C183.5 221.2 176.3 229.3 168.0 236.0 C159.7 242.7 148.8 249.0 140.0 252.0 C131.2 255.0 123.0 256.3 115.0 254.0 C107.0 251.7 97.2 246.2 92.0 238.0 C86.8 229.8 83.0 217.2 84.0 205.0 C85.0 192.8 89.5 177.2 98.0 165.0 C106.5 152.8 120.3 139.5 135.0 132.0 C149.7 124.5 174.3 121.0 186.0 120.0Z" fill="url(#pitg)" stroke="#120a0a" stroke-width="5"/><path d="M103 170 C92 188 90 215 100 232" fill="none" stroke="#7a6264" stroke-width="2.5" stroke-linecap="round"/></g></defs><use href="#av" transform="translate(33.00,63.00) scale(0.27855)"/><use href="#av" transform="translate(225.20,63.00) scale(0.27855)"/><use href="#av" transform="translate(129.40,119.00) scale(0.27855)"/><use href="#av" transform="translate(33.00,175.80) scale(0.27855)"/><use href="#av" transform="translate(225.20,175.00) scale(0.27855)"/><use href="#av" transform="translate(129.40,224.00) scale(0.27855)"/><use href="#av" transform="translate(128.50,14.50) scale(0.27855) rotate(1 170 180)"/></svg>
<svg class="a" style="left:152px;top:62px;" width="354" height="353" viewBox="0 0 354 353"><defs><g id="avsel"><path d="M245.0 28.0 C253.8 28.5 262.2 31.5 268.0 36.0 C273.8 40.5 277.5 46.8 280.0 55.0 C282.5 63.2 283.7 72.5 283.0 85.0 C282.3 97.5 279.7 114.2 276.0 130.0 C272.3 145.8 267.0 163.0 261.0 180.0 C255.0 197.0 248.8 216.7 240.0 232.0 C231.2 247.3 218.7 260.7 208.0 272.0 C197.3 283.3 187.7 292.2 176.0 300.0 C164.3 307.8 151.7 315.7 138.0 319.0 C124.3 322.3 107.2 323.2 94.0 320.0 C80.8 316.8 67.3 309.2 59.0 300.0 C50.7 290.8 46.2 278.3 44.0 265.0 C41.8 251.7 42.7 235.8 46.0 220.0 C49.3 204.2 55.8 185.8 64.0 170.0 C72.2 154.2 83.2 140.0 95.0 125.0 C106.8 110.0 120.8 92.8 135.0 80.0 C149.2 67.2 166.7 55.8 180.0 48.0 C193.3 40.2 204.2 36.3 215.0 33.0 C225.8 29.7 236.2 27.5 245.0 28.0Z" fill="none" stroke="#4a68c8" stroke-width="2.5"/><path d="M215.0 33.0 C225.0 30.2 235.8 25.5 245.0 25.0 C254.2 24.5 263.0 26.7 270.0 30.0 C277.0 33.3 282.3 37.5 287.0 45.0 C291.7 52.5 295.7 64.2 298.0 75.0 C300.3 85.8 301.3 95.8 301.0 110.0 C300.7 124.2 298.7 145.0 296.0 160.0 C293.3 175.0 290.2 185.8 285.0 200.0 C279.8 214.2 273.3 230.8 265.0 245.0 C256.7 259.2 246.7 273.3 235.0 285.0 C223.3 296.7 209.2 307.0 195.0 315.0 C180.8 323.0 165.0 330.3 150.0 333.0 C135.0 335.7 117.5 333.5 105.0 331.0 C92.5 328.5 82.8 323.2 75.0 318.0 C67.2 312.8 61.8 308.0 58.0 300.0 C54.2 292.0 53.3 281.7 52.0 270.0 C50.7 258.3 48.7 244.2 50.0 230.0 C51.3 215.8 55.0 200.0 60.0 185.0 C65.0 170.0 71.3 154.5 80.0 140.0 C88.7 125.5 100.3 111.0 112.0 98.0 C123.7 85.0 137.8 71.3 150.0 62.0 C162.2 52.7 174.2 46.8 185.0 42.0 C195.8 37.2 205.0 35.8 215.0 33.0Z" fill="none" stroke="#4a68c8" stroke-width="1.5" stroke-dasharray="0 300 400"/></g></defs><use href="#avsel" transform="translate(128.50,14.50) scale(0.27855) rotate(1 170 180)"/><polygon points="150.4,17.5 179.6,19.8 209.0,22.8 205.6,62.2 202.1,101.7 172.4,98.6 143.0,95.6 146.4,56.4" fill="none" stroke="#4a68c8" stroke-width="0.8"/><rect x="149.1" y="16.2" width="2.6" height="2.6" fill="#c8d0e8" stroke="#4a68c8" stroke-width="0.7"/><rect x="178.3" y="18.5" width="2.6" height="2.6" fill="#c8d0e8" stroke="#4a68c8" stroke-width="0.7"/><rect x="207.7" y="21.5" width="2.6" height="2.6" fill="#c8d0e8" stroke="#4a68c8" stroke-width="0.7"/><rect x="204.3" y="60.9" width="2.6" height="2.6" fill="#c8d0e8" stroke="#4a68c8" stroke-width="0.7"/><rect x="200.8" y="100.4" width="2.6" height="2.6" fill="#c8d0e8" stroke="#4a68c8" stroke-width="0.7"/><rect x="171.1" y="97.3" width="2.6" height="2.6" fill="#c8d0e8" stroke="#4a68c8" stroke-width="0.7"/><rect x="141.7" y="94.3" width="2.6" height="2.6" fill="#c8d0e8" stroke="#4a68c8" stroke-width="0.7"/><rect x="145.1" y="55.1" width="2.6" height="2.6" fill="#c8d0e8" stroke="#4a68c8" stroke-width="0.7"/></svg>
<div class="a" style="left:49px;top:420px;width:29px;height:10px;background:#262626;"></div>
<div class="t" style="left:50.3px;top:422.61px;font-size:5.9px;color:#a8a8a8;">39.33%</div>
<div class="a" style="left:79px;top:420px;width:10px;height:10px;background:#262626;"></div>
<svg class="a" style="left:80.5px;top:422.7px;" width="7" height="4.6" viewBox="0 0 7 4.6"><polyline points="1,1 3.5,3.6 6,1" fill="none" stroke="#9a9a9a" stroke-width="1"/></svg>
<div class="a" style="left:92px;top:420px;width:30px;height:10px;background:#262626;"></div>
<div class="t" style="left:94px;top:422.61px;font-size:5.9px;color:#a8a8a8;">0°</div>
<div class="a" style="left:123px;top:420px;width:10px;height:10px;background:#262626;"></div>
<svg class="a" style="left:124.5px;top:422.7px;" width="7" height="4.6" viewBox="0 0 7 4.6"><polyline points="1,1 3.5,3.6 6,1" fill="none" stroke="#9a9a9a" stroke-width="1"/></svg>
<svg class="a" style="left:138px;top:420px;" width="16" height="10" viewBox="0 0 16 10"><g fill="#4a4a4a"><rect x="1" y="2" width="1" height="6"/><path d="M6 2 V8 L2.5 5 Z"/><path d="M13 2 V8 L9.5 5 Z"/></g></svg>
<div class="a" style="left:159px;top:420px;width:23px;height:10px;background:#262626;"></div>
<div class="t" style="left:161px;top:422.61px;font-size:5.9px;color:#a8a8a8;">1</div>
<div class="a" style="left:183px;top:420px;width:10px;height:10px;background:#262626;"></div>
<svg class="a" style="left:184.5px;top:422.7px;" width="7" height="4.6" viewBox="0 0 7 4.6"><polyline points="1,1 3.5,3.6 6,1" fill="none" stroke="#9a9a9a" stroke-width="1"/></svg>
<svg class="a" style="left:198px;top:420px;" width="16" height="10" viewBox="0 0 16 10"><g fill="#4a4a4a"><path d="M2 2 V8 L5.5 5 Z"/><path d="M9 2 V8 L12.5 5 Z"/><rect x="13" y="2" width="1" height="6"/></g></svg>
<div class="t" style="left:266px;top:422.65px;font-size:5.85px;color:#8a8a8a;">Selection</div>
<svg class="a" style="left:341px;top:421px;" width="5" height="7" viewBox="0 0 5 7"><path d="M1 0.5 V6.5 L4.5 3.5 Z" fill="#b0b0b0"/></svg>
<svg class="a" style="left:352px;top:421px;" width="5" height="7" viewBox="0 0 5 7"><polyline points="4,0.5 1,3.5 4,6.5" fill="none" stroke="#8a8a8a" stroke-width="0.9"/></svg>
<div class="a" style="left:360px;top:419px;width:251px;height:12px;background:#262626;"></div>
<div class="a" style="left:472px;top:420px;width:16px;height:9px;background:#3a3a3a;border-radius:4px"></div>
<svg class="a" style="left:602px;top:421px;" width="5" height="7" viewBox="0 0 5 7"><polyline points="1,0.5 4,3.5 1,6.5" fill="none" stroke="#8a8a8a" stroke-width="0.9"/></svg>
<div class="a" style="left:613px;top:231px;width:7px;height:15px;background:#3a3a3a;border-radius:3px"></div>
<svg class="a" style="left:612.7px;top:411.8px;" width="6.6" height="4.4" viewBox="0 0 6.6 4.4"><polyline points="1,1 3.3,3.4 5.6,1" fill="none" stroke="#8a8a8a" stroke-width="1"/></svg>
<svg class="a" style="left:757px;top:42px;" width="6" height="4" viewBox="0 0 6 4"><path d="M0.3 0.3 L2.3 2 L0.3 3.7 Z M3.3 0.3 L5.3 2 L3.3 3.7 Z" fill="#9a9a9a"/></svg>
<div class="a" style="left:682px;top:47px;width:1px;height:16px;background:#252525;"></div>
<div class="a" style="left:717px;top:47px;width:1px;height:16px;background:#252525;"></div>
<div class="t" style="left:658px;top:53.12px;font-size:6.0px;color:#8a8a8a;-webkit-text-stroke:0.2px #8a8a8a">Stroke</div>
<div class="t" style="left:688.3px;top:53.12px;font-size:6.0px;color:#8a8a8a;-webkit-text-stroke:0.2px #8a8a8a">Gradient</div>
<svg class="a" style="left:755px;top:51px;" width="8" height="8" viewBox="0 0 8 8"><g fill="#707070"><rect x="1" y="1.5" width="6" height="1"/><rect x="1" y="3.7" width="6" height="1"/><rect x="1" y="5.9" width="6" height="1"/></g></svg>
<div class="t" style="left:653px;top:72.52px;font-size:6.0px;color:#6a6a6a;">R</div>
<div class="a" style="left:664.5px;top:74.3px;width:61.5px;height:2px;background:linear-gradient(90deg,#18c060,#c8c860);"></div>
<svg class="a" style="left:721.5px;top:75.8px;" width="6" height="5" viewBox="0 0 6 5"><path d="M3 0 L5.5 2.5 V5 H0.5 V2.5 Z" fill="#b8b8b8"/></svg>
<div class="a" style="left:731px;top:70.3px;width:20px;height:11px;background:#262626;"></div>
<div class="t" style="left:733px;top:72.52px;font-size:6.0px;color:#c8c8c8;">251</div>
<div class="t" style="left:653px;top:92.22px;font-size:6.0px;color:#6a6a6a;">G</div>
<div class="a" style="left:664.5px;top:94px;width:61.5px;height:2px;background:linear-gradient(90deg,#c01880,#c8c860);"></div>
<svg class="a" style="left:722px;top:95.5px;" width="6" height="5" viewBox="0 0 6 5"><path d="M3 0 L5.5 2.5 V5 H0.5 V2.5 Z" fill="#b8b8b8"/></svg>
<div class="a" style="left:731px;top:90px;width:20px;height:11px;background:#262626;"></div>
<div class="t" style="left:733px;top:92.22px;font-size:6.0px;color:#c8c8c8;">252</div>
<div class="t" style="left:653px;top:111.82px;font-size:6.0px;color:#6a6a6a;">B</div>
<div class="a" style="left:664.5px;top:113.6px;width:61.5px;height:2px;background:linear-gradient(90deg,#c8c810,#c8c8c8);"></div>
<svg class="a" style="left:698.7px;top:115.1px;" width="6" height="5" viewBox="0 0 6 5"><path d="M3 0 L5.5 2.5 V5 H0.5 V2.5 Z" fill="#b8b8b8"/></svg>
<div class="a" style="left:731px;top:109.6px;width:20px;height:11px;background:#262626;"></div>
<div class="t" style="left:733px;top:111.82px;font-size:6.0px;color:#c8c8c8;">155</div>
<div class="t" style="left:714px;top:134.42px;font-size:6.0px;color:#6a6a6a;">#</div>
<div class="a" style="left:721px;top:131.3px;width:34px;height:11px;background:#262626;"></div>
<div class="t" style="left:724px;top:134.22px;font-size:6.0px;color:#c8c8c8;">fbfc9b</div>
<div class="a" style="left:625px;top:146px;width:131px;height:115px;background:#3a3a3a;"></div>
<div class="a" style="left:626px;top:147px;width:130px;height:112px;background:linear-gradient(to bottom,rgba(0,0,0,0) 0%,rgba(0,0,0,0) 52%,rgba(0,0,0,0.4) 72%,rgba(0,0,0,0.7) 88%,#000 95%,#000 100%),linear-gradient(to bottom,rgba(178,172,178,0.95) 0%,rgba(178,172,178,0.5) 16%,rgba(178,172,178,0.15) 35%,rgba(178,172,178,0) 50%),linear-gradient(90deg,#d80000 0%,#c8b400 17%,#00a000 34%,#00a8b0 51%,#1010c8 67%,#b000b0 84%,#d80000 100%)"></div>
<div class="a" style="left:664px;top:264px;width:29px;height:18px;background:#323232;"></div>
<div class="t" style="left:628px;top:270.97px;font-size:6.3px;color:#7a7a7a;">Pathfinder</div>
<svg class="a" style="left:666px;top:270px;" width="4" height="7" viewBox="0 0 4 7"><path d="M2 0.5 L3.5 2.5 H0.5 Z M2 6.5 L3.5 4.5 H0.5 Z" fill="#8a8a8a"/></svg>
<div class="t" style="left:672.8px;top:271.22px;font-size:6.0px;color:#c8c8c8;font-weight:bold;">Align</div>
<svg class="a" style="left:755px;top:269px;" width="8" height="8" viewBox="0 0 8 8"><g fill="#707070"><rect x="1" y="1.5" width="6" height="1"/><rect x="1" y="3.7" width="6" height="1"/><rect x="1" y="5.9" width="6" height="1"/></g></svg>
<div class="t" style="left:625px;top:288.75px;font-size:5.96px;color:#8a8a9a;">Align Objects:</div>
<div class="a" style="left:625px;top:316px;width:133px;height:1px;background:#2a2a2a;"></div>
<div class="t" style="left:625px;top:324.15px;font-size:5.96px;color:#8a8a9a;">Distribute Objects:</div>
<div class="a" style="left:625px;top:351.5px;width:133px;height:1px;background:#2a2a2a;"></div>
<div class="t" style="left:625px;top:359.25px;font-size:5.96px;color:#8a8a9a;">Distribute Spacing:</div>
<div class="t" style="left:709.6px;top:359.25px;font-size:5.96px;color:#8a8a9a;">Align To:</div>
<div class="a" style="left:703.5px;top:356px;width:1px;height:28px;background:#2a2a2a;"></div>
<svg class="a" style="left:627px;top:300px;" width="12" height="12" viewBox="0 0 12 12"><g fill="#858585"><rect x="0.5" y="0" width="1" height="11"/><rect x="2" y="2" width="5" height="3"/><rect x="2" y="6" width="8" height="3"/></g></svg>
<svg class="a" style="left:649px;top:300px;" width="12" height="12" viewBox="0 0 12 12"><g fill="#858585"><rect x="4.5" y="0" width="1" height="11"/><rect x="2.5" y="2" width="5" height="3"/><rect x="1" y="6" width="8" height="3"/></g></svg>
<svg class="a" style="left:671px;top:300px;" width="12" height="12" viewBox="0 0 12 12"><g fill="#858585"><rect x="9" y="0" width="1" height="11"/><rect x="3.5" y="2" width="5" height="3"/><rect x="0.5" y="6" width="8" height="3"/></g></svg>
<svg class="a" style="left:706px;top:300px;" width="12" height="12" viewBox="0 0 12 12"><g fill="#858585"><rect x="0" y="0.5" width="11" height="1"/><rect x="2" y="2" width="3" height="8"/><rect x="6" y="2" width="3" height="5"/></g></svg>
<svg class="a" style="left:728px;top:300px;" width="12" height="12" viewBox="0 0 12 12"><g fill="#858585"><rect x="0" y="5" width="11" height="1"/><rect x="2" y="1" width="3" height="9"/><rect x="6" y="3" width="3" height="5"/></g></svg>
<svg class="a" style="left:749px;top:300px;" width="12" height="12" viewBox="0 0 12 12"><g fill="#858585"><rect x="0" y="10" width="11" height="1"/><rect x="2" y="1" width="3" height="8.5"/><rect x="6" y="4" width="3" height="5.5"/></g></svg>
<svg class="a" style="left:627px;top:335px;" width="12" height="12" viewBox="0 0 12 12"><g fill="#858585"><rect x="0" y="0.5" width="11" height="1"/><rect x="2" y="2" width="7" height="2.5"/><rect x="2" y="6.5" width="7" height="3"/><rect x="0" y="9.5" width="11" height="1"/></g></svg>
<svg class="a" style="left:649px;top:335px;" width="12" height="12" viewBox="0 0 12 12"><g fill="#858585"><rect x="0" y="2.5" width="11" height="1"/><rect x="3" y="1" width="5" height="3"/><rect x="2" y="6" width="7" height="3"/><rect x="0" y="7" width="11" height="1"/></g></svg>
<svg class="a" style="left:671px;top:335px;" width="12" height="12" viewBox="0 0 12 12"><g fill="#858585"><rect x="3" y="0.5" width="5" height="3"/><rect x="0" y="3.5" width="11" height="1"/><rect x="2" y="6" width="7" height="3"/><rect x="0" y="9.5" width="11" height="1"/></g></svg>
<svg class="a" style="left:706px;top:335px;" width="12" height="12" viewBox="0 0 12 12"><g fill="#858585"><rect x="0.5" y="0" width="1" height="11"/><rect x="2" y="2" width="3" height="7"/><rect x="6.5" y="3" width="2.5" height="5"/></g></svg>
<svg class="a" style="left:728px;top:335px;" width="12" height="12" viewBox="0 0 12 12"><g fill="#858585"><rect x="2.5" y="0" width="1" height="11"/><rect x="1" y="2" width="3" height="7"/><rect x="6" y="3" width="3" height="5"/><rect x="7.5" y="0" width="1" height="11"/></g></svg>
<svg class="a" style="left:749px;top:335px;" width="12" height="12" viewBox="0 0 12 12"><g fill="#858585"><rect x="1.5" y="2" width="3" height="7"/><rect x="6" y="3" width="2.5" height="5"/><rect x="9.5" y="0" width="1" height="11"/></g></svg>
<svg class="a" style="left:627px;top:371px;" width="12" height="12" viewBox="0 0 12 12"><g fill="#858585"><rect x="0.5" y="0" width="1" height="11"/><rect x="3" y="1" width="7" height="3.5"/><rect x="3" y="6" width="7" height="3.5"/></g></svg>
<svg class="a" style="left:647px;top:371px;" width="12" height="12" viewBox="0 0 12 12"><g fill="#858585"><rect x="0" y="0.5" width="11" height="1"/><rect x="1" y="2.5" width="3.5" height="8"/><rect x="6" y="3.5" width="3.5" height="6"/></g></svg>
<div class="a" style="left:662.5px;top:369px;width:34px;height:14px;background:#2e2e2e;"></div>
<div class="t" style="left:674px;top:373.72px;font-size:6.0px;color:#555;">0 pt</div>
<svg class="a" style="left:665px;top:370px;" width="8" height="11" viewBox="0 0 8 11"><polyline points="1.5,3.5 4,1.5 6.5,3.5" fill="none" stroke="#555"/><polyline points="1.5,7.5 4,9.5 6.5,7.5" fill="none" stroke="#555"/></svg>
<div class="a" style="left:710.5px;top:369px;width:14px;height:15px;background:#1e1e1e;border-radius:2px"></div>
<svg class="a" style="left:712px;top:370px;" width="12" height="13" viewBox="0 0 12 13"><rect x="2.5" y="3" width="7" height="8" fill="#b0b0b0"/><path d="M2 1 V3 M1 2 H3" stroke="#b0b0b0"/></svg>
<svg class="a" style="left:730px;top:371px;" width="12" height="12" viewBox="0 0 12 12"><g fill="#8a8a8a"><rect x="0" y="0" width="2" height="2"/><rect x="4.5" y="0" width="2" height="2"/><rect x="9" y="0" width="2" height="2"/><rect x="0" y="4.5" width="2" height="2"/><rect x="9" y="4.5" width="2" height="2"/><rect x="0" y="9" width="2" height="2"/><rect x="4.5" y="9" width="2" height="2"/><rect x="9" y="9" width="2" height="2"/></g></svg>
<svg class="a" style="left:751px;top:371px;" width="12" height="12" viewBox="0 0 12 12"><g fill="#4a4a4a"><rect x="0" y="0" width="2" height="2"/><rect x="9" y="0" width="2" height="2"/><rect x="0" y="9" width="2" height="2"/><rect x="9" y="9" width="2" height="2"/><rect x="4" y="4" width="4" height="4"/></g></svg>
<div class="a" style="left:621px;top:388px;width:44px;height:17px;background:#323232;"></div>
<svg class="a" style="left:624px;top:393px;" width="4" height="7" viewBox="0 0 4 7"><path d="M2 0.5 L3.5 2.5 H0.5 Z M2 6.5 L3.5 4.5 H0.5 Z" fill="#8a8a8a"/></svg>
<div class="t" style="left:631.7px;top:393.32px;font-size:6.0px;color:#c8c8c8;font-weight:bold;">Transform</div>
<svg class="a" style="left:755px;top:393px;" width="8" height="8" viewBox="0 0 8 8"><g fill="#707070"><rect x="1" y="1.5" width="6" height="1"/><rect x="1" y="3.7" width="6" height="1"/><rect x="1" y="5.9" width="6" height="1"/></g></svg>
<div class="a" style="left:557px;top:37px;width:94px;height:133px;background:#545454;"></div>
<svg class="a" style="left:540px;top:18px;" width="114" height="156" viewBox="0 0 114 156"><path d="M3.45 3.85 H28.75 V19.65 H109.85 V151.35 H18.45 V20.05 H3.45 Z" fill="none" stroke="#f5072b" stroke-width="2.3"/></svg>
<div class="a" style="left:559px;top:51px;width:89.5px;height:13.2px;background:#5f5f5f;"></div>
<div class="t" style="left:572px;top:41.37px;font-size:7.0px;color:#ececec;-webkit-text-stroke:0.3px #ececec">All</div>
<div class="t" style="left:572px;top:54.57px;font-size:7.0px;color:#4da0f0;-webkit-text-stroke:0.3px #4da0f0">Fill Color</div>
<div class="t" style="left:572px;top:67.77px;font-size:7.0px;color:#ececec;-webkit-text-stroke:0.3px #ececec">Stroke Color</div>
<div class="t" style="left:572px;top:80.97px;font-size:7.0px;color:#ececec;-webkit-text-stroke:0.3px #ececec">Fill &amp; Stroke Color</div>
<div class="t" style="left:572px;top:94.17px;font-size:7.0px;color:#ececec;-webkit-text-stroke:0.3px #ececec">Stroke Weight</div>
<div class="t" style="left:572px;top:107.37px;font-size:7.0px;color:#ececec;-webkit-text-stroke:0.3px #ececec">Opacity</div>
<div class="t" style="left:572px;top:120.57px;font-size:7.0px;color:#7c7c7c;-webkit-text-stroke:0.3px #7c7c7c">Graphic Style</div>
<div class="t" style="left:572px;top:133.77px;font-size:7.0px;color:#ececec;-webkit-text-stroke:0.3px #ececec">Appearance</div>
<div class="t" style="left:572px;top:146.97px;font-size:7.0px;color:#7c7c7c;-webkit-text-stroke:0.3px #7c7c7c">Appearance Attribute</div>
<div class="t" style="left:572px;top:160.17px;font-size:7.0px;color:#7c7c7c;-webkit-text-stroke:0.3px #7c7c7c">Shape</div>
<svg class="a" style="left:561px;top:54px;" width="8" height="7" viewBox="0 0 8 7"><polyline points="1,3.5 3,5.5 7,1" fill="none" stroke="#d8d8d8" stroke-width="1.1"/></svg>
<svg class="a" style="left:510px;top:40px;" width="45" height="45" viewBox="0 0 45 45"><polygon points="14.7,8.7 39.1,8.7 39.1,33.1 30.4,25.5 15.3,40.6 7.2,32.5 22.3,17.4" fill="#f5072b"/></svg>
</body></html>
